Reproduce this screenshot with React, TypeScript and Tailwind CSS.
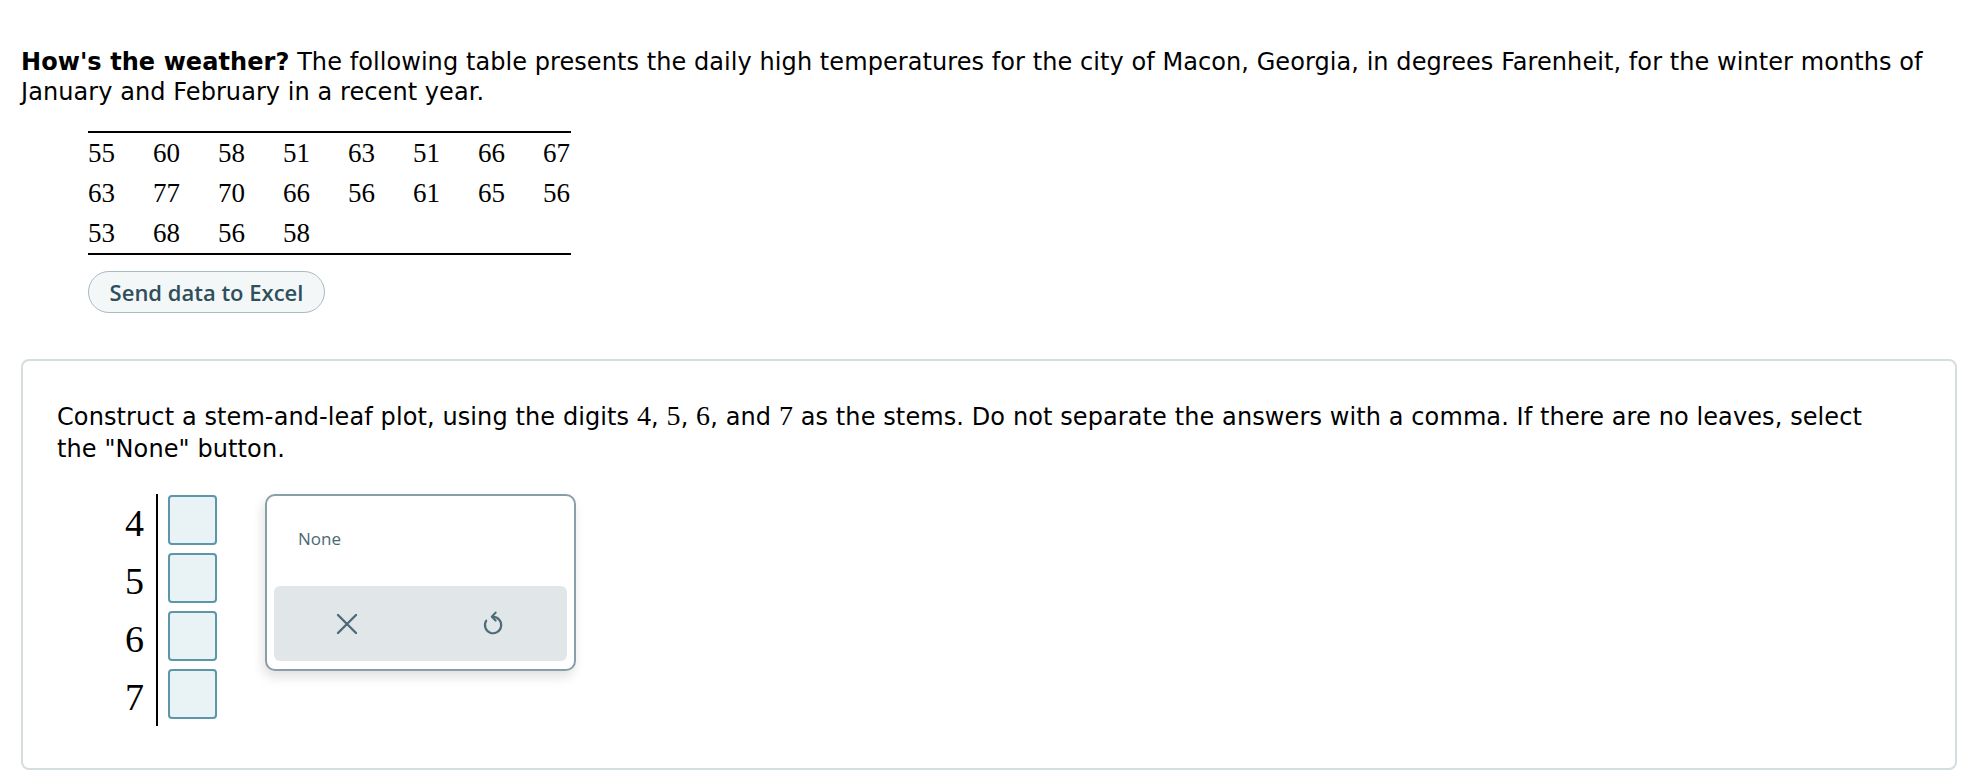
import React from "react";

const rows = [
  ["55", "60", "58", "51", "63", "51", "66", "67"],
  ["63", "77", "70", "66", "56", "61", "65", "56"],
  ["53", "68", "56", "58"],
];

const serif = { fontFamily: '"Liberation Serif", "Times New Roman", serif' };
const ui = { fontFamily: '"Open Sans", Lato, sans-serif' };

function UndoIcon() {
  return (
    <svg width="26" height="30" viewBox="0 0 24 26" fill="none" stroke="#4d6c77" strokeWidth="2" strokeLinecap="round" strokeLinejoin="round">
      <path d="M11 6.5 A7.5 7.5 0 1 1 4.8 10" />
      <path d="M13.5 2.5 L10 6.3 L13.5 9.8" />
    </svg>
  );
}

function XIcon() {
  return (
    <svg width="22" height="22" viewBox="0 0 22 22" fill="none" stroke="#4d6c77" strokeWidth="2.4" strokeLinecap="round">
      <path d="M2 2 L20 20" />
      <path d="M20 2 L2 20" />
    </svg>
  );
}

export default function App() {
  return (
    <div className="min-h-[784px] bg-white text-black pt-[47px] pl-[21px] pr-[27px]" style={{ fontFamily: '"DejaVu Sans", Verdana, sans-serif' }}>
      <p className="text-[24px] leading-[30px] tracking-[0.07px]">
        <b>How's the weather?</b> The following table presents the daily high temperatures for the city of Macon, Georgia, in degrees Farenheit, for the winter months of January and February in a recent year.
      </p>

      <div className="ml-[67px] mt-[24px] w-[483px] border-t-2 border-b-2 border-black" style={serif}>
        {rows.map((r, i) => (
          <div key={i} className="grid grid-cols-[repeat(8,28px)] gap-x-[37px] h-[40px] items-center text-[27px] leading-none">
            {r.map((n, j) => (
              <span key={j}>{n}</span>
            ))}
          </div>
        ))}
      </div>

      <button className="ml-[67px] mt-[16px] h-[42px] w-[237px] rounded-full border-[1.5px] border-[#a9bac2] bg-[#f4f7f8] text-[22px] font-semibold text-[#2e4f5c] flex items-center justify-center" style={ui}>
        Send data to Excel
      </button>

      <div className="mt-[46px] w-[1936px] h-[411px] rounded-lg border-2 border-[#d5dde1] pt-[40px] pl-[34px] pr-[55px]">
        <p className="text-[24px] leading-[32px] tracking-[0.1px]">
          Construct a stem-and-leaf plot, using the digits{" "}
          <span className="text-[28px] leading-none" style={serif}>4</span>,{" "}
          <span className="text-[28px] leading-none" style={serif}>5</span>,{" "}
          <span className="text-[28px] leading-none" style={serif}>6</span>, and{" "}
          <span className="text-[28px] leading-none" style={serif}>7</span> as the stems. Do not separate the answers with a comma. If there are no leaves, select the "None" button.
        </p>

        <div className="mt-[29px] flex items-start">
          <div className="flex">
            <div className="flex flex-col items-end pr-[12px] w-[99px]" style={serif}>
              {["4", "5", "6", "7"].map((s) => (
                <div key={s} className="h-[58px] flex items-center text-[38px] leading-none">{s}</div>
              ))}
            </div>
            <div className="w-[2px] h-[232px] bg-black" />
            <div className="flex flex-col pl-[10px]">
              {["4", "5", "6", "7"].map((s) => (
                <div key={s} className="h-[58px] pt-[1px]">
                  <div className="w-[49px] h-[50px] rounded-[4px] border-2 border-[#5b97a8] bg-[#e9f3f6]" />
                </div>
              ))}
            </div>
          </div>

          <div className="ml-[48px] w-[311px] h-[177px] rounded-[10px] border-2 border-[#8a9ea7] bg-white shadow-[-2px_6px_12px_rgba(0,0,0,0.12)] flex flex-col px-[7px] pb-[8px]" style={ui}>
            <div className="flex-1 flex items-center pl-[24px] pb-[4px] text-[17px] text-[#4a6a76]">None</div>
            <div className="h-[75px] rounded-[6px] bg-[#e1e6e9] flex">
              <div className="flex-1 flex items-center justify-center"><XIcon /></div>
              <div className="flex-1 flex items-center justify-center"><UndoIcon /></div>
            </div>
          </div>
        </div>
      </div>
    </div>
  );
}
